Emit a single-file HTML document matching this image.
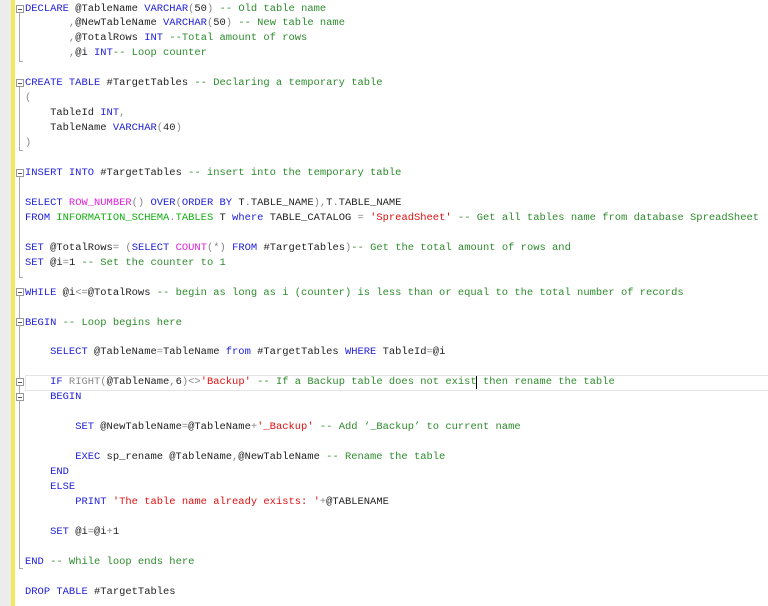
<!DOCTYPE html>
<html><head><meta charset="utf-8"><style>
html,body{margin:0;padding:0;background:#fff;width:768px;height:606px;overflow:hidden;position:relative}
.g{position:absolute;left:0;top:0;width:11px;height:606px;background:#ececec}
.y{position:absolute;left:11px;top:0;width:4px;height:606px;background:#f3e85a}
pre{position:absolute;left:25px;top:1.5px;margin:0;font-family:"Liberation Mono",monospace;font-size:10.46px;line-height:14.96px;color:#222}
.k{color:#2020d8}.c{color:#2e8b2e}.s{color:#e01010}.o{color:#888}.m{color:#e020e0}.n{color:#10b010}
.v{position:absolute;left:19px;width:1px;background:#aaa}
.b{position:absolute;left:16px;width:6px;height:6px;border:1px solid #999;background:#fff}
.b:after{content:"";position:absolute;left:1px;top:3px;width:4px;height:1px;background:#555}
.t{position:absolute;left:19px;width:4px;height:1px;background:#aaa}
.hl{position:absolute;left:25px;top:375px;width:743px;height:14px;border:1px solid #e4e4e4;border-right:none}
.cur{position:absolute;left:476px;top:376px;width:1px;height:13px;background:#000}
</style></head><body>
<div class="g"></div><div class="y"></div>
<div class="hl"></div>
<div class="v" style="top:9px;height:52px"></div><div class="t" style="top:61px"></div>
<div class="v" style="top:83px;height:67px"></div><div class="t" style="top:150px"></div>
<div class="v" style="top:173px;height:104px"></div><div class="t" style="top:277px"></div>
<div class="v" style="top:292px;height:276px"></div><div class="t" style="top:568px"></div>
<div class="b" style="top:5px"></div>
<div class="b" style="top:79px"></div>
<div class="b" style="top:169px"></div>
<div class="b" style="top:288px"></div>
<div class="b" style="top:318px"></div>
<div class="b" style="top:378px"></div>
<div class="b" style="top:393px"></div>
<pre><span class="k">DECLARE</span> @TableName <span class="k">VARCHAR</span><span class="o">(</span>50<span class="o">)</span> <span class="c">-- Old table name</span>
       <span class="o">,</span>@NewTableName <span class="k">VARCHAR</span><span class="o">(</span>50<span class="o">)</span> <span class="c">-- New table name</span>
       <span class="o">,</span>@TotalRows <span class="k">INT</span> <span class="c">--Total amount of rows</span>
       <span class="o">,</span>@i <span class="k">INT</span><span class="c">-- Loop counter</span>

<span class="k">CREATE TABLE</span> #TargetTables <span class="c">-- Declaring a temporary table</span>
<span class="o">(</span>
    TableId <span class="k">INT</span><span class="o">,</span>
    TableName <span class="k">VARCHAR</span><span class="o">(</span>40<span class="o">)</span>
<span class="o">)</span>

<span class="k">INSERT INTO</span> #TargetTables <span class="c">-- insert into the temporary table</span>

<span class="k">SELECT</span> <span class="m">ROW_NUMBER</span><span class="o">()</span> <span class="k">OVER</span><span class="o">(</span><span class="k">ORDER BY</span> T<span class="o">.</span>TABLE_NAME<span class="o">),</span>T<span class="o">.</span>TABLE_NAME
<span class="k">FROM</span> <span class="n">INFORMATION_SCHEMA</span><span class="o">.</span><span class="n">TABLES</span> T <span class="k">where</span> TABLE_CATALOG <span class="o">=</span> <span class="s">'SpreadSheet'</span> <span class="c">-- Get all tables name from database SpreadSheet</span>

<span class="k">SET</span> @TotalRows<span class="o">=</span> <span class="o">(</span><span class="k">SELECT</span> <span class="m">COUNT</span><span class="o">(*)</span> <span class="k">FROM</span> #TargetTables<span class="o">)</span><span class="c">-- Get the total amount of rows and</span>
<span class="k">SET</span> @i<span class="o">=</span>1 <span class="c">-- Set the counter to 1</span>

<span class="k">WHILE</span> @i<span class="o">&lt;=</span>@TotalRows <span class="c">-- begin as long as i (counter) is less than or equal to the total number of records</span>

<span class="k">BEGIN</span> <span class="c">-- Loop begins here</span>

    <span class="k">SELECT</span> @TableName<span class="o">=</span>TableName <span class="k">from</span> #TargetTables <span class="k">WHERE</span> TableId<span class="o">=</span>@i

    <span class="k">IF</span> <span class="o">RIGHT(</span>@TableName<span class="o">,</span>6<span class="o">)&lt;&gt;</span><span class="s">'Backup'</span> <span class="c">-- If a Backup table does not exist then rename the table</span>
    <span class="k">BEGIN</span>

        <span class="k">SET</span> @NewTableName<span class="o">=</span>@TableName<span class="o">+</span><span class="s">'_Backup'</span> <span class="c">-- Add ‘_Backup’ to current name</span>

        <span class="k">EXEC</span> sp_rename @TableName<span class="o">,</span>@NewTableName <span class="c">-- Rename the table</span>
    <span class="k">END</span>
    <span class="k">ELSE</span>
        <span class="k">PRINT</span> <span class="s">'The table name already exists: '</span><span class="o">+</span>@TABLENAME

    <span class="k">SET</span> @i<span class="o">=</span>@i<span class="o">+</span>1

<span class="k">END</span> <span class="c">-- While loop ends here</span>

<span class="k">DROP TABLE</span> #TargetTables</pre>
<div class="cur"></div>
</body></html>
